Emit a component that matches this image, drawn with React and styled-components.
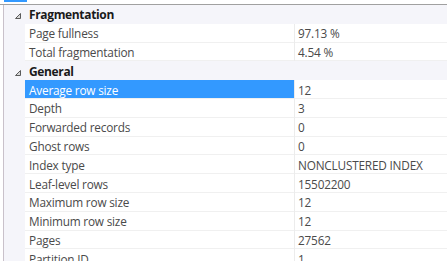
import React from "react";
import styled, { createGlobalStyle } from "styled-components";

const Global = createGlobalStyle`
  html, body { margin: 0; padding: 0; background: #ffffff; overflow: hidden; }
  body { font-family: "Open Sans", "Noto Sans", sans-serif; }
`;

const Page = styled.div`
  width: 447px;
  height: 261px;
  overflow: hidden;
  background: #ffffff;
  display: flex;
  flex-direction: column;
`;

const TopStrip = styled.div`
  height: 4px;
  flex: none;
  display: flex;
  align-items: flex-start;
  border-bottom: 1px solid #a0a0a0;
`;

const ActiveTab = styled.div`
  margin-left: 4px;
  width: 23px;
  height: 2px;
  background: #3399ff;
`;

const Frame = styled.div`
  margin-left: 3px;
  border-left: 1px solid #c9c1ca;
  flex: 1;
  display: flex;
  flex-direction: column;
`;

const CategoryRow = styled.div`
  height: 18.8px;
  flex: none;
  background: #f5f5fa;
  display: flex;
  align-items: center;
  box-sizing: border-box;
  padding-top: 1px;
`;

const Toggle = styled.svg`
  width: 6px;
  height: 6px;
  margin-left: 11px;
  margin-right: 8px;
  margin-top: 3px;
  flex: none;
`;

const CategoryLabel = styled.span`
  font-size: 12px;
  font-weight: 700;
  color: #1a1a1a;
  letter-spacing: -0.35px;
`;

const Row = styled.div`
  height: 18.8px;
  flex: none;
  display: grid;
  grid-template-columns: 21px 269px 1px 1fr;
  background: #f5f5fa;
`;

const Cell = styled.div`
  display: flex;
  align-items: center;
  font-size: 11.8px;
  white-space: nowrap;
  overflow: hidden;
  box-sizing: border-box;
  border-bottom: 1px solid #f0f0f0;
  padding-left: ${(p) => (p.$value ? "3px" : "4px")};
  padding-top: 1px;
  background: ${(p) => (p.$selected ? "#3399ff" : "#ffffff")};
  color: ${(p) => (p.$selected ? "#ffffff" : "#4a4a4a")};
  letter-spacing: -0.2px;
`;

const Divider = styled.div`
  background: #ececec;
`;

const data = [
  {
    name: "Fragmentation",
    rows: [
      ["Page fullness", "97.13 %"],
      ["Total fragmentation", "4.54 %"],
    ],
  },
  {
    name: "General",
    rows: [
      ["Average row size", "12", true],
      ["Depth", "3"],
      ["Forwarded records", "0"],
      ["Ghost rows", "0"],
      ["Index type", "NONCLUSTERED INDEX"],
      ["Leaf-level rows", "15502200"],
      ["Maximum row size", "12"],
      ["Minimum row size", "12"],
      ["Pages", "27562"],
      ["Partition ID", "1"],
    ],
  },
];

export default function App() {
  return (
    <Page>
      <Global />
      <TopStrip>
        <ActiveTab />
      </TopStrip>
      <Frame>
        {data.map((cat) => (
          <React.Fragment key={cat.name}>
            <CategoryRow>
              <Toggle viewBox="0 0 6 6">
                <polygon points="5.5,0.5 5.5,5.5 0.5,5.5" fill="#d8d8d8" stroke="#5a5a5a" strokeWidth="1" />
              </Toggle>
              <CategoryLabel>{cat.name}</CategoryLabel>
            </CategoryRow>
            {cat.rows.map(([n, v, sel]) => (
              <Row key={n}>
                <span />
                <Cell $selected={sel}>{n}</Cell>
                <Divider />
                <Cell $value>{v}</Cell>
              </Row>
            ))}
          </React.Fragment>
        ))}
      </Frame>
    </Page>
  );
}
